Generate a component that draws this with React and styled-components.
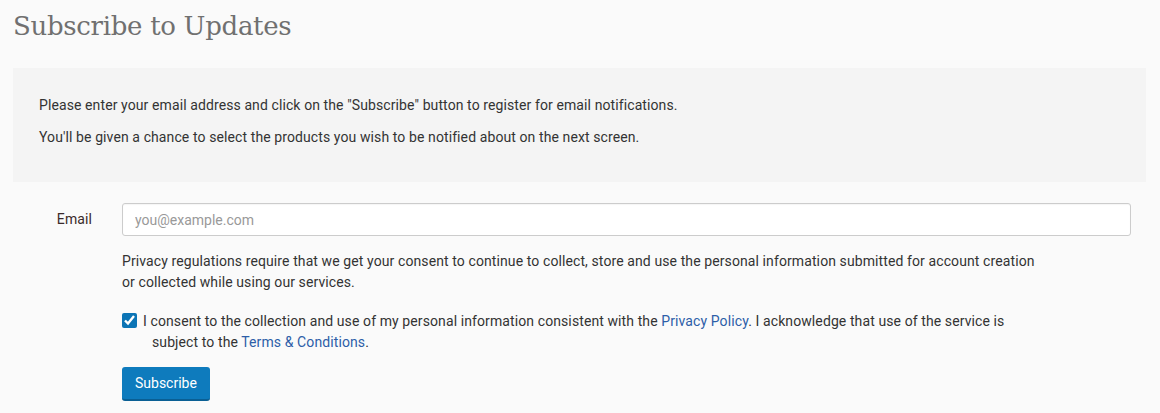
import React from "react";
import styled, { createGlobalStyle } from "styled-components";

const GlobalStyle = createGlobalStyle`
  html, body { margin: 0; padding: 0; background: #fafafa; }
  body {
    font-family: Roboto, "Liberation Sans", Arial, sans-serif;
    font-size: 14px;
    letter-spacing: 0.1px;
    color: #333333;
  }
  * { box-sizing: border-box; }
`;

const Page = styled.div`
  padding: 0 14px 0 13px;
`;

const Title = styled.h1`
  margin: 0;
  padding-top: 8px;
  height: 68px;
  font-family: "DejaVu Serif", "Liberation Serif", serif;
  font-weight: 400;
  font-size: 26px;
  line-height: 36px;
  color: #707070;
  letter-spacing: -0.3px;
`;

const Intro = styled.div`
  background: #f4f4f4;
  padding: 26px 26px 28px;
  height: 114px;

  p {
    margin: 0 0 10px;
    line-height: 22px;
  }
`;

const Form = styled.form`
  padding: 21px 15px 0 0;
`;

const Row = styled.div`
  display: flex;
  align-items: flex-start;
`;

const Label = styled.label`
  width: 79px;
  flex: none;
  text-align: right;
  line-height: 33px;
  color: #3b2a2a;
  margin-right: 30px;
`;

const Fields = styled.div`
  flex: 1;
  min-width: 0;
`;

const Input = styled.input`
  display: block;
  width: 100%;
  height: 33px;
  padding: 0 12px;
  border: 1px solid #cccccc;
  border-radius: 3px;
  background: #ffffff;
  font: inherit;
  font-size: 14px;
  color: #333;
  box-shadow: inset 0 1px 1px rgba(0, 0, 0, 0.04);
  &::placeholder { color: #999999; }
`;

const Help = styled.p`
  margin: 15px 0 0;
  max-width: 920px;
  line-height: 21px;
`;

const Consent = styled.label`
  display: block;
  margin-top: 18px;
  padding-left: 30px;
  max-width: 895px;
  line-height: 21px;
`;

const Check = styled.input`
  width: 15px;
  height: 15px;
  margin: 0 6px 0 -30px;
  vertical-align: -2px;
  accent-color: #0b74b5;
`;

const Link = styled.a`
  color: #2d5ea8;
  text-decoration: none;
`;

const Button = styled.button`
  margin-top: 14px;
  height: 34px;
  padding: 0 13px;
  border: none;
  border-bottom: 2px solid #0a5f94;
  border-radius: 3px;
  background: #0e7bbd;
  color: #ffffff;
  font: inherit;
  font-size: 14px;
  cursor: pointer;
`;

export default function App() {
  return (
    <Page>
      <GlobalStyle />
      <Title>Subscribe to Updates</Title>
      <Intro>
        <p>Please enter your email address and click on the "Subscribe" button to register for email notifications.</p>
        <p>You'll be given a chance to select the products you wish to be notified about on the next screen.</p>
      </Intro>
      <Form onSubmit={(e) => e.preventDefault()}>
        <Row>
          <Label htmlFor="email">Email</Label>
          <Fields>
            <Input id="email" type="email" placeholder="you@example.com" />
            <Help>
              Privacy regulations require that we get your consent to continue to collect, store and use the personal information submitted for account creation or collected while using our services.
            </Help>
            <Consent>
              <Check type="checkbox" defaultChecked />
              I consent to the collection and use of my personal information consistent with the <Link href="#">Privacy Policy</Link>. I acknowledge that use of the service is subject to the <Link href="#">Terms &amp; Conditions</Link>.
            </Consent>
            <Button type="submit">Subscribe</Button>
          </Fields>
        </Row>
      </Form>
    </Page>
  );
}
